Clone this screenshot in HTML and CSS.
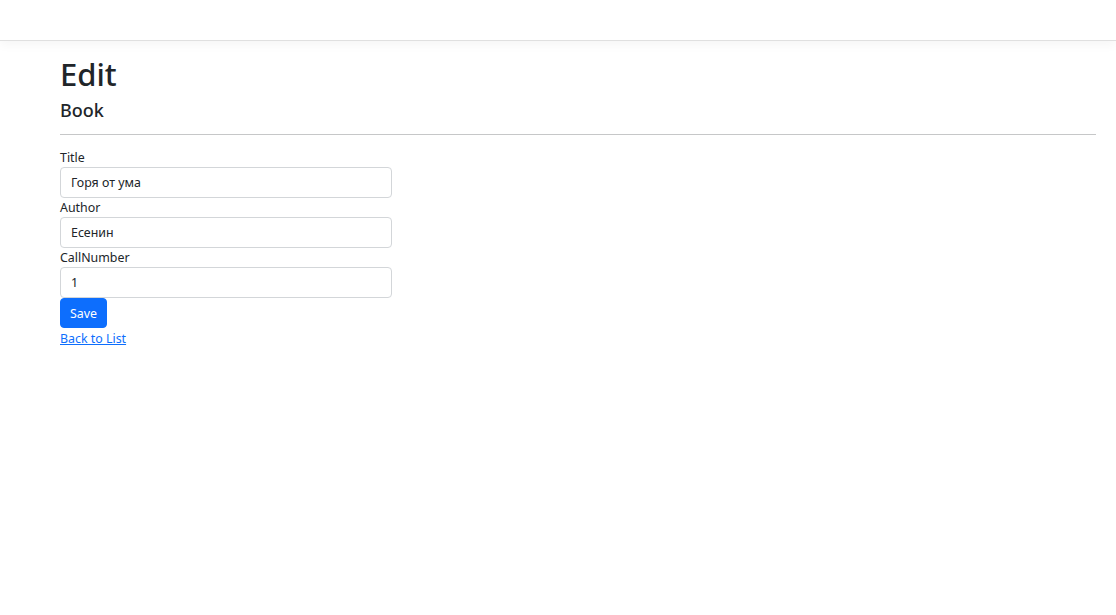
FILE: index.html
```html
<!DOCTYPE html>
<html lang="en">
<head>
<meta charset="utf-8">
<title>Edit</title>
<link rel="stylesheet" href="styles.css">
</head>
<body>
<header class="navbar"></header>
<main class="page">
  <h1 class="title">Edit</h1>
  <h4 class="subtitle">Book</h4>
  <hr class="divider">
  <form class="form">
    <div class="field">
      <label class="label">Title</label>
      <input class="input" type="text" value="Горя от ума">
    </div>
    <div class="field">
      <label class="label">Author</label>
      <input class="input" type="text" value="Есенин">
    </div>
    <div class="field">
      <label class="label">CallNumber</label>
      <input class="input" type="text" value="1">
    </div>
    <button class="btn" type="button">Save</button>
  </form>
  <a class="back" href="#">Back to List</a>
</main>
</body>
</html>
```
FILE: styles.css
```css
html, body {
  margin: 0;
  padding: 0;
  background: #fff;
}
body {
  font-family: "Noto Sans", "Open Sans", sans-serif;
  font-size: 12.4px;
  color: #212529;
}
.navbar {
  height: 40px;
  border-bottom: 1px solid #e0e0e0;
  box-shadow: 0 4px 10px rgba(0, 0, 0, 0.04);
}
.page {
  padding: 0 20px 0 60px;
}
.title {
  margin: 13px 0 0;
  font-size: 31px;
  font-weight: 500;
  line-height: 40px;
}
.subtitle {
  margin: 5px 0 0;
  font-size: 18px;
  font-weight: 500;
  line-height: 22px;
}
.divider {
  margin: 13px 0 13px;
  border: 0;
  border-top: 1px solid #c6c7c8;
}
.form {
  display: flex;
  flex-direction: column;
  align-items: flex-start;
}
.field {
  display: flex;
  flex-direction: column;
}
.label {
  line-height: 19px;
  height: 19px;
}
.input {
  box-sizing: border-box;
  width: 332px;
  height: 31px;
  margin: 0;
  padding: 0 10px;
  font-family: inherit;
  font-size: 12.4px;
  color: #212529;
  border: 1px solid #d3d6d9;
  border-radius: 4px;
  background: #fff;
}
.btn {
  box-sizing: border-box;
  height: 30px;
  padding: 0 9px;
  font-family: inherit;
  font-size: 12.4px;
  color: #fff;
  background: #0d6efd;
  border: 1px solid #0d6efd;
  border-radius: 4px;
}
.back {
  display: inline-block;
  margin-top: 2px;
  line-height: 18px;
  color: #0d6efd;
  text-decoration: underline;
}
```
